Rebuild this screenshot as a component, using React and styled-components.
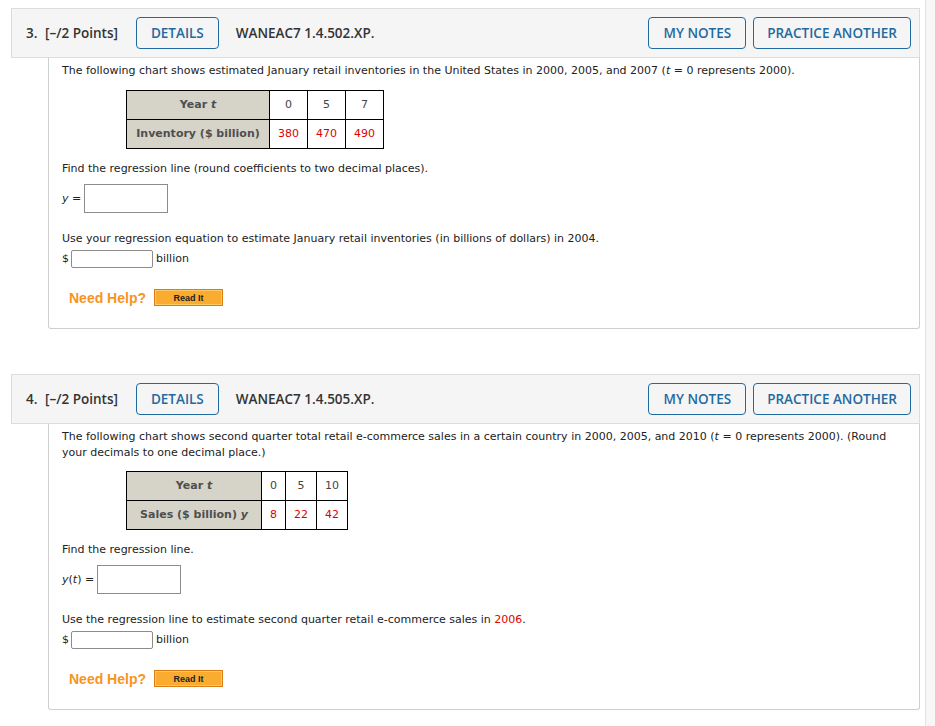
import React from "react";
import styled, { createGlobalStyle } from "styled-components";

const GlobalStyle = createGlobalStyle`
  html, body { margin: 0; padding: 0; background: #fff; }
  body { font-family: "DejaVu Sans", Verdana, sans-serif; }
  * { box-sizing: border-box; }
`;

const Page = styled.div`
  display: flex;
  height: 726px;
  overflow: hidden;
  background: #fff;
`;

const Main = styled.main`
  flex: 0 0 925px;
  padding: 8px 0 0 11px;
  display: flex;
  flex-direction: column;
`;

const ScrollTrack = styled.div`
  flex: 1;
  border-left: 1px solid #e3e3e3;
  background: #f7f7f7;
`;

const Question = styled.section`
  width: 909px;
  margin-bottom: 45px;
`;

const Header = styled.header`
  display: flex;
  align-items: center;
  height: 50px;
  background: #f5f5f5;
  border: 1px solid #dcdcdc;
  padding: 0 8px 0 14px;
  font-family: "Open Sans", "Noto Sans", sans-serif;
  font-size: 13.5px;
  font-weight: 600;
  color: #333;
`;

const QNum = styled.span`
  width: 19px;
`;

const Points = styled.span`
  margin-right: 18px;
`;

const OutlineButton = styled.button`
  height: 32px;
  padding: 0 ${(p) => p.$px || 14}px;
  border: 1px solid #1f6aa0;
  border-radius: 4px;
  background: transparent;
  color: #1f6aa0;
  font-family: "Open Sans", "Noto Sans", sans-serif;
  font-size: 13.5px;
  font-weight: 600;
  cursor: pointer;
`;

const Code = styled.span`
  margin-left: 17px;
  flex: 1;
`;

const Actions = styled.div`
  display: flex;
  gap: 7px;
`;

const Body = styled.div`
  margin-left: 37px;
  border: 1px solid #cfcfcf;
  border-top: none;
  border-radius: 0 0 3px 3px;
  padding: 5px 13px 22px;
  font-size: 11px;
  line-height: 16px;
  color: #222;
`;

const Para = styled.p`
  margin: ${(p) => p.$mt || 0}px 0 0;
`;

const Red = styled.span`
  color: #e00000;
`;

const DataTable = styled.table`
  margin: ${(p) => p.$mt}px 0 0 64px;
  border-collapse: collapse;
  border: 1px solid #000;
  font-size: 11px;
`;

const Row = styled.tr`
  height: 29px;
`;

const HeadCell = styled.th`
  width: ${(p) => p.$w}px;
  background: #d6d3c9;
  color: #4f4f4f;
  font-weight: bold;
  padding: 0 8px;
  border: 1px solid #000;
  text-align: center;
  white-space: nowrap;
`;

const Cell = styled.td`
  padding: 0 8px;
  border: 1px solid #000;
  text-align: center;
  color: ${(p) => (p.$red ? "#e00000" : "#444")};
`;

const AnswerRow = styled.div`
  display: flex;
  align-items: center;
  margin-top: ${(p) => p.$mt || 0}px;
`;

const Label = styled.span`
  margin-right: 3px;
`;

const BigInput = styled.input`
  width: 84px;
  height: 29px;
  border: 1px solid #8c8c8c;
  background: #fff;
  padding: 0 4px;
`;

const SmallInput = styled.input`
  width: 82px;
  height: 18px;
  border: 1px solid #8c8c8c;
  border-radius: 2px;
  background: #fff;
  margin: 0 3px 0 2px;
  padding: 0 3px;
`;

const HelpRow = styled.div`
  display: flex;
  align-items: center;
  margin: 21px 0 0 7px;
`;

const NeedHelp = styled.span`
  font-family: "Liberation Sans", Arial, sans-serif;
  font-weight: bold;
  font-size: 14px;
  color: #f7941e;
  margin-right: 8px;
`;

const ReadIt = styled.button`
  width: 69px;
  height: 17px;
  padding: 0;
  border: 1px solid #e07d12;
  box-shadow: inset 0 0 0 1px #fcc860;
  background: #f9ac2f;
  font-family: "Liberation Sans", Arial, sans-serif;
  font-weight: bold;
  font-size: 9px;
  color: #222;
  cursor: pointer;
`;

const Var = styled.i``;

function QuestionCard({ num, code, children }) {
  return (
    <Question>
      <Header>
        <QNum>{num}.</QNum>
        <Points>[–/2 Points]</Points>
        <OutlineButton>DETAILS</OutlineButton>
        <Code>{code}</Code>
        <Actions>
          <OutlineButton $px={14}>MY NOTES</OutlineButton>
          <OutlineButton $px={13}>PRACTICE ANOTHER</OutlineButton>
        </Actions>
      </Header>
      <Body>{children}</Body>
    </Question>
  );
}

function Help() {
  return (
    <HelpRow>
      <NeedHelp>Need Help?</NeedHelp>
      <ReadIt>Read It</ReadIt>
    </HelpRow>
  );
}

export default function App() {
  return (
    <Page>
      <GlobalStyle />
      <Main>
        <QuestionCard num={3} code="WANEAC7 1.4.502.XP.">
          <Para>
            The following chart shows estimated January retail inventories in the United States in 2000, 2005, and 2007 (<Var>t</Var> = 0 represents 2000).
          </Para>
          <DataTable $mt={11}>
            <tbody>
              <Row>
                <HeadCell $w={143}>Year <Var>t</Var></HeadCell>
                <Cell>0</Cell>
                <Cell>5</Cell>
                <Cell>7</Cell>
              </Row>
              <Row>
                <HeadCell $w={143}>Inventory ($ billion)</HeadCell>
                <Cell $red>380</Cell>
                <Cell $red>470</Cell>
                <Cell $red>490</Cell>
              </Row>
            </tbody>
          </DataTable>
          <Para $mt={12}>Find the regression line (round coefficients to two decimal places).</Para>
          <AnswerRow $mt={7}>
            <Label><Var>y</Var> =</Label>
            <BigInput />
          </AnswerRow>
          <Para $mt={18}>Use your regression equation to estimate January retail inventories (in billions of dollars) in 2004.</Para>
          <AnswerRow $mt={3}>
            <span>$</span>
            <SmallInput />
            <span>billion</span>
          </AnswerRow>
          <Help />
        </QuestionCard>

        <QuestionCard num={4} code="WANEAC7 1.4.505.XP.">
          <Para>
            The following chart shows second quarter total retail e-commerce sales in a certain country in 2000, 2005, and 2010 (<Var>t</Var> = 0 represents 2000). (Round your decimals to one decimal place.)
          </Para>
          <DataTable $mt={10}>
            <tbody>
              <Row>
                <HeadCell $w={135}>Year <Var>t</Var></HeadCell>
                <Cell>0</Cell>
                <Cell>5</Cell>
                <Cell>10</Cell>
              </Row>
              <Row>
                <HeadCell $w={135}>Sales ($ billion) <Var>y</Var></HeadCell>
                <Cell $red>8</Cell>
                <Cell $red>22</Cell>
                <Cell $red>42</Cell>
              </Row>
            </tbody>
          </DataTable>
          <Para $mt={12}>Find the regression line.</Para>
          <AnswerRow $mt={7}>
            <Label><Var>y</Var>(<Var>t</Var>) =</Label>
            <BigInput />
          </AnswerRow>
          <Para $mt={18}>
            Use the regression line to estimate second quarter retail e-commerce sales in <Red>2006</Red>.
          </Para>
          <AnswerRow $mt={3}>
            <span>$</span>
            <SmallInput />
            <span>billion</span>
          </AnswerRow>
          <Help />
        </QuestionCard>
      </Main>
      <ScrollTrack />
    </Page>
  );
}
